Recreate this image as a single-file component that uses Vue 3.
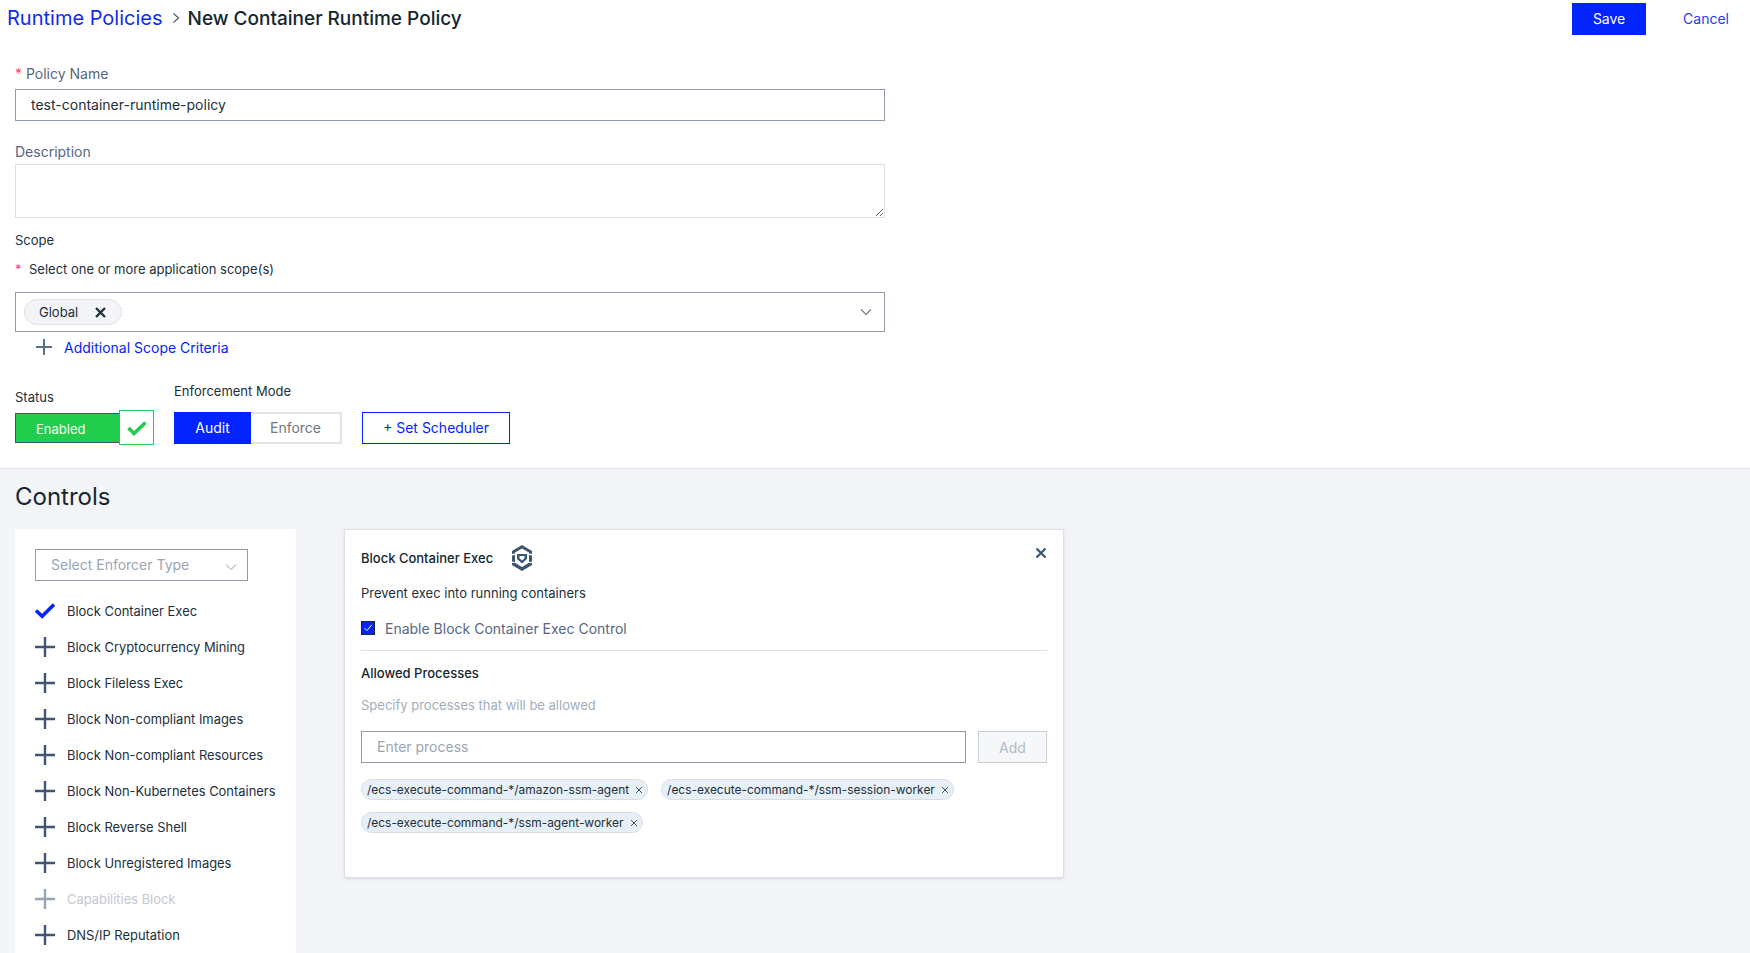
<script setup>
const controls = [
  { name: 'Block Container Exec', state: 'on' },
  { name: 'Block Cryptocurrency Mining' },
  { name: 'Block Fileless Exec' },
  { name: 'Block Non-compliant Images' },
  { name: 'Block Non-compliant Resources' },
  { name: 'Block Non-Kubernetes Containers' },
  { name: 'Block Reverse Shell' },
  { name: 'Block Unregistered Images' },
  { name: 'Capabilities Block', state: 'off' },
  { name: 'DNS/IP Reputation' }
]
const tags = [
  '/ecs-execute-command-*/amazon-ssm-agent',
  '/ecs-execute-command-*/ssm-session-worker',
  '/ecs-execute-command-*/ssm-agent-worker'
]
</script>

<template>
  <div class="page">
    <section class="top">
      <header class="header">
        <div class="crumbs">
          <a class="crumb-link">Runtime Policies</a>
          <svg class="crumb-sep" width="8" height="12" viewBox="0 0 8 12"><path d="M1.5 1.5 6.5 6l-5 4.5" fill="none" stroke="#44546a" stroke-width="1.1"/></svg>
          <h1 class="crumb-title">New Container Runtime Policy</h1>
        </div>
        <div class="actions">
          <button class="btn-save">Save</button>
          <a class="cancel">Cancel</a>
        </div>
      </header>

      <div class="form">
        <label class="label name-label"><span class="req">*</span> Policy Name</label>
        <input class="input name-input" value="test-container-runtime-policy" />
        <label class="label desc-label">Description</label>
        <textarea class="textarea"></textarea>
        <div class="scope-title">Scope</div>
        <div class="scope-sub"><span class="req req-wide">*</span>Select one or more application scope(s)</div>
        <div class="multi">
          <span class="chip">
            Global
            <svg width="13" height="13" viewBox="0 0 13 13"><path d="M2 2l9 9M11 2l-9 9" stroke="#1c2f3a" stroke-width="2.3" fill="none"/></svg>
          </span>
          <svg class="chev" width="12" height="8" viewBox="0 0 12 8"><path d="M1 1.5l5 5 5-5" fill="none" stroke="#6b7a8c" stroke-width="1.1"/></svg>
        </div>
        <div class="additional">
          <svg width="16" height="16" viewBox="0 0 16 16"><path d="M8 0v16M0 8h16" stroke="#5a6f88" stroke-width="2"/></svg>
          <a>Additional Scope Criteria</a>
        </div>
      </div>

      <div class="modes">
        <div class="status">
          <div class="field-label">Status</div>
          <div class="toggle">
            <span class="toggle-bar">Enabled</span>
            <span class="toggle-knob">
              <svg width="20" height="16" viewBox="0 0 20 16"><path d="M1.500 8l5.500 5.500L18.500 2.500" fill="none" stroke="#22cc4d" stroke-width="3.6"/></svg>
            </span>
          </div>
        </div>
        <div class="enforce">
          <div class="field-label">Enforcement Mode</div>
          <div class="enforce-row">
            <button class="seg seg-on">Audit</button>
            <button class="seg seg-off">Enforce</button>
            <button class="scheduler">+ Set Scheduler</button>
          </div>
        </div>
      </div>
    </section>

    <section class="bottom">
      <h2 class="controls-title">Controls</h2>
      <div class="panels">
        <aside class="side">
          <div class="enforcer">
            <span>Select Enforcer Type</span>
            <svg width="12" height="8" viewBox="0 0 12 8"><path d="M1 1.5l5 5 5-5" fill="none" stroke="#8b98a8" stroke-width="1"/></svg>
          </div>
          <ul class="list">
            <li v-for="c in controls" :key="c.name" class="item" :class="{ disabled: c.state === 'off' }">
              <svg v-if="c.state === 'on'" width="20" height="16" viewBox="0 0 20 16"><path d="M1 7.500l6.200 5.800L19 1.500" fill="none" stroke="#0323ff" stroke-width="3.500"/></svg>
              <svg v-else width="20" height="20" viewBox="0 0 20 20"><path d="M10 0v20M0 10h20" :stroke="c.state === 'off' ? '#98a5b5' : '#3d5570'" stroke-width="2.4"/></svg>
              <span>{{ c.name }}</span>
            </li>
          </ul>
        </aside>

        <article class="card">
          <button class="close">
            <svg width="12" height="12" viewBox="0 0 12 12"><path d="M1.5 1.5l9 9M10.5 1.5l-9 9" stroke="#3d5570" stroke-width="2.2" fill="none"/></svg>
          </button>
          <div class="card-head">
            <span class="card-title">Block Container Exec</span>
            <svg width="24" height="26" viewBox="0 0 24 26">
              <path d="M12 0 22 6v3l-3-.6V7.6L12 3.500 5 7.600v.8L2 9V6Z" fill="#3d5570"/>
              <path d="M2 10.500l3-.6v7.200l-3-.6Zm20 0-3-.6v7.200l3-.6Z" fill="#3d5570"/>
              <path d="M2 18l3-.3 7 4.300 7-4.300 3 .3v2L12 26 2 20Z" fill="#3d5570"/>
              <path d="M7 9h10v5l-5 4.500L7 14Z" fill="#3d5570"/>
              <path d="M9.500 11h5v2.200L12 15.500l-2.500-2.300Z" fill="#fff"/>
            </svg>
          </div>
          <p class="card-desc">Prevent exec into running containers</p>
          <div class="enable">
            <span class="box">
              <svg width="10" height="10" viewBox="0 0 10 10"><path d="M1.500 5.200l2.400 2.400L8.600 2" fill="none" stroke="#fff" stroke-width="1"/></svg>
            </span>
            <span>Enable Block Container Exec Control</span>
          </div>
          <div class="rule"></div>
          <div class="allowed">Allowed Processes</div>
          <div class="hint">Specify processes that will be allowed</div>
          <div class="add-row">
            <input class="input process" placeholder="Enter process" />
            <button class="add" disabled>Add</button>
          </div>
          <div class="tags">
            <span v-for="t in tags" :key="t" class="tag">
              {{ t }}
              <svg width="8" height="8" viewBox="0 0 8 8"><path d="M1 1l6 6M7 1 1 7" stroke="#44546a" stroke-width="1" fill="none"/></svg>
            </span>
          </div>
        </article>
      </div>
    </section>
  </div>
</template>

<style>
html, body { margin: 0; background: #fff; }
</style>

<style scoped>
* { box-sizing: border-box; }
.page {
  width: 1750px;
  height: 953px;
  overflow: hidden;
  display: flex;
  flex-direction: column;
  font-family: Inter, "Noto Sans", sans-serif;
  font-size: 14px;
  color: #1c2f3a;
  background: #fff;
}
a { color: #0323ff; cursor: pointer; }
button { font-family: inherit; }
.top { height: 469px; border-bottom: 1px solid #e0e2e6; flex: none; }
.header {
  height: 64px;
  display: flex;
  justify-content: space-between;
  align-items: flex-start;
  padding: 3px 21px 0 7px;
}
.crumbs { display: flex; align-items: center; height: 32px; margin-top: -1px; }
.crumb-link { font-size: 20px; color: #0f2bf0; }
.crumb-sep { margin: 0 8px 0 9px; }
.crumb-title { margin: 0; font-size: 19px; font-weight: 500; color: #14262e; }
.actions { display: flex; align-items: center; }
.btn-save {
  width: 74px; height: 32px; border: 0; background: #0323ff; color: #fff; font-size: 14px;
  margin-right: 37px; padding-bottom: 2px;
}
.cancel { font-size: 14px; color: #2340ee; margin-top: -1px; }
.form { width: 870px; margin-left: 15px; display: flex; flex-direction: column; }
.label { font-size: 14px; line-height: 20px; color: #56677f; }
.req { color: #f4476b; }
.req-wide { display: inline-block; width: 14px; }
.input {
  display: block; width: 100%; height: 32px; border: 1px solid #8e9aa9; padding: 0 15px 2px;
  font: 14px Inter, sans-serif; color: #1c2f3a; outline: 0; background: #fff; border-radius: 0;
}
.input::placeholder { color: #9aa5b3; opacity: 1; }
.name-label { margin-bottom: 5px; }
.desc-label { margin-top: 21px; margin-bottom: 2px; }
.textarea { display: block; width: 100%; height: 54px; border: 1px solid #dcdfe6; outline: 0; border-radius: 0; }
.scope-title { margin-top: 12px; font-size: 13px; line-height: 20px; color: #1c2f3a; }
.scope-sub { margin-top: 9px; font-size: 13px; line-height: 20px; color: #1c2f3a; }
.multi {
  margin-top: 13px; height: 40px; border: 1px solid #8e9aa9; display: flex; align-items: center;
  justify-content: space-between; padding: 0 12px 0 8px;
}
.chip {
  display: inline-flex; align-items: center; gap: 16px; height: 26px; padding: 0 14px 0 14px;
  background: #f2f4f8; border: 1px solid #dfe2e8; border-radius: 13px; font-size: 13px;
}
.additional { margin-top: 5px; margin-left: 21px; height: 20px; display: flex; align-items: center; gap: 12px; font-size: 14px; }
.modes { margin: 24px 0 0 15px; display: flex; align-items: flex-end; gap: 20px; }
.field-label { font-size: 13px; line-height: 20px; color: #1c2f3a; }
.status .field-label { margin-bottom: 3px; }
.toggle { display: flex; align-items: center; height: 35px; }
.toggle-bar {
  width: 104px; height: 30px; background: #22cc4d; border: 1px solid #3d5570; border-right: 0;
  color: #f2fff5; font-size: 13px; line-height: 30px; padding-left: 20px;
}
.toggle-knob {
  width: 35px; height: 35px; background: #fff; border: 1px solid #22cc4d;
  display: flex; align-items: center; justify-content: center;
}
.enforce { padding-bottom: 1px; }
.enforce .field-label { margin-bottom: 11px; }
.enforce-row { display: flex; }
.seg { height: 32px; font-size: 14px; border: 0; padding-bottom: 2px; }
.seg-on { width: 77px; background: #0323ff; color: #fff; }
.seg-off { width: 91px; background: #fff; color: #6f7780; border: 2px solid #e2e4ea; border-left: 0; font-size: 14px; }
.scheduler {
  margin-left: 20px; width: 148px; height: 32px; background: #fff; color: #0323ff;
  border: 1px solid #0323ff; font-size: 14px; padding-bottom: 2px;
}
.bottom { flex: 1; min-height: 0; background: #f2f4f8; padding: 13px 0 0 15px; }
.controls-title { margin: 0 0 17px; font-size: 24px; font-weight: 400; line-height: 30px; color: #14262e; }
.panels { display: flex; align-items: flex-start; gap: 48px; }
.side { width: 281px; min-height: 430px; background: #fff; padding: 20px 20px 0; }
.enforcer {
  width: 213px; height: 32px; border: 1px solid #8e9aa9; display: flex; align-items: center;
  justify-content: space-between; padding: 0 10px 2px 15px; color: #9aa5b3; font-size: 14px;
}
.enforcer svg { margin-top: 5px; }
.list { list-style: none; margin: 12px 0 0; padding: 0; }
.item { height: 36px; display: flex; align-items: center; gap: 12px; font-size: 12.93px; color: #1c2f3a; white-space: nowrap; }
.item svg { flex: none; width: 20px; }
.item.disabled { color: #c3c8d0; }
.card {
  position: relative; width: 720px; height: 349px; background: #fff; border: 1px solid #dcdfe3;
  box-shadow: 0 1px 3px rgba(40, 50, 70, 0.12); padding: 15px 16px 0;
}
.close { position: absolute; top: 17px; right: 16px; width: 12px; height: 12px; padding: 0; border: 0; background: none; display: flex; }
.card-head { display: flex; align-items: center; gap: 17px; height: 26px; }
.card-title { font-size: 13px; font-weight: 500; color: #14262e; }
.card-desc { margin: 12px 0 0; font-size: 13px; line-height: 20px; color: #1c2f3a; }
.enable { margin-top: 15px; height: 20px; display: flex; align-items: center; gap: 10px; font-size: 14px; color: #56677f; }
.box { width: 14px; height: 14px; background: #0323ff; border: 1px solid #14262e; display: flex; align-items: center; justify-content: center; }
.rule { margin-top: 12px; height: 1px; background: #dfe1e5; }
.allowed { margin-top: 12px; height: 20px; line-height: 20px; font-size: 13px; font-weight: 500; color: #14262e; }
.hint { margin-top: 12px; height: 20px; line-height: 20px; font-size: 13px; color: #a3adba; }
.add-row { margin-top: 16px; display: flex; gap: 12px; }
.process { flex: 1; width: auto; }
.add { width: 69px; height: 32px; background: #f6f7f9; border: 1px solid #c8ced6; color: #b2bac4; font-size: 14px; }
.tags { margin-top: 16px; width: 640px; display: flex; flex-wrap: wrap; column-gap: 13px; row-gap: 12px; }
.tag {
  display: inline-flex; align-items: center; gap: 6px; height: 21px; padding: 0 4px 0 5px; background: #e8f0f7;
  border: 1px solid #d8dde3; border-radius: 11px; font-size: 11.95px; color: #1c2f3a; white-space: nowrap;
}
</style>
